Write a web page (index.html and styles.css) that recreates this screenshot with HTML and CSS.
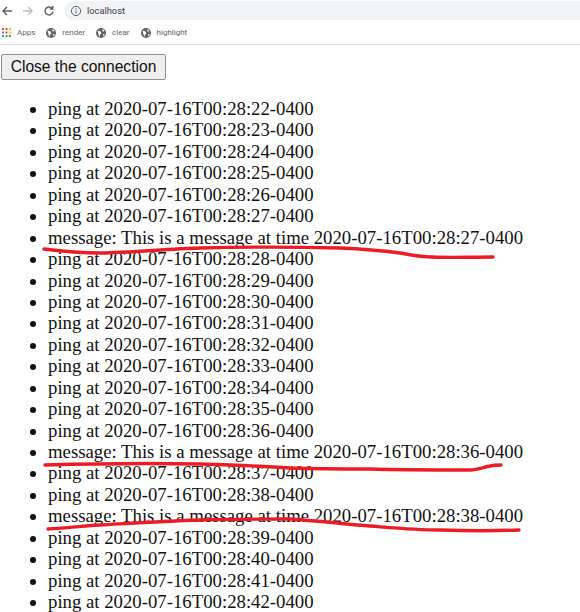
FILE: index.html
```html
<!DOCTYPE html>
<html lang="en">
<head>
  <meta charset="UTF-8" />
  <title>localhost</title>
  <link rel="stylesheet" href="styles.css">
</head>
<body>
<div class="chrome">
  <div class="toolbar">
    <svg class="nav-icon" viewBox="0 0 12 12"><path d="M11 6H2M6 2L2 6l4 4" fill="none" stroke="#5f6368" stroke-width="1.5"/></svg>
    <svg class="nav-icon" viewBox="0 0 12 12"><path d="M1 6h9M6 2l4 4-4 4" fill="none" stroke="#bdc1c6" stroke-width="1.5"/></svg>
    <svg class="nav-icon" viewBox="0 0 12 12"><path d="M10 6.500A4 4 0 1 1 8.800 3M9.800 1v3h-3" fill="none" stroke="#5f6368" stroke-width="1.500"/></svg>
    <div class="omnibox">
      <svg class="info-icon" viewBox="0 0 12 12"><circle cx="6" cy="6" r="4.600" fill="none" stroke="#5f6368"/><path d="M6 5.300v3.200M6 3.400v1" stroke="#5f6368"/></svg>
      <span class="url">localhost</span>
    </div>
  </div>
  <div class="bookmarks">
    <div class="bookmark">
      <svg class="apps-icon" viewBox="0 0 9 9">
        <rect x="0" y="0" width="2" height="2" fill="#ea4335"/><rect x="3.500" y="0" width="2" height="2" fill="#ea4335"/><rect x="7" y="0" width="2" height="2" fill="#fbbc05"/>
        <rect x="0" y="3.500" width="2" height="2" fill="#4285f4"/><rect x="3.500" y="3.500" width="2" height="2" fill="#ea4335"/><rect x="7" y="3.500" width="2" height="2" fill="#fbbc05"/>
        <rect x="0" y="7" width="2" height="2" fill="#4285f4"/><rect x="3.500" y="7" width="2" height="2" fill="#34a853"/><rect x="7" y="7" width="2" height="2" fill="#34a853"/>
      </svg>
      <span>Apps</span>
    </div>
    <div class="bookmark"><svg class="globe-icon" viewBox="0 0 10 10"><circle cx="5" cy="5" r="5" fill="#5f6368"/><path d="M1.500 2.500l3 1 1 2-1.500 1-.5 2.500-1-2.500zM6 1l2.500 1.500L7 4zM7 6l2 .5L7.500 8.500z" fill="#fff"/></svg><span>render</span></div>
    <div class="bookmark"><svg class="globe-icon" viewBox="0 0 10 10"><circle cx="5" cy="5" r="5" fill="#5f6368"/><path d="M1.500 2.500l3 1 1 2-1.500 1-.5 2.500-1-2.500zM6 1l2.500 1.500L7 4zM7 6l2 .5L7.500 8.500z" fill="#fff"/></svg><span>clear</span></div>
    <div class="bookmark"><svg class="globe-icon" viewBox="0 0 10 10"><circle cx="5" cy="5" r="5" fill="#5f6368"/><path d="M1.500 2.500l3 1 1 2-1.500 1-.5 2.500-1-2.500zM6 1l2.500 1.500L7 4zM7 6l2 .5L7.500 8.500z" fill="#fff"/></svg><span>highlight</span></div>
  </div>
</div>

<div class="page">
  <button class="close-btn">Close the connection</button>
  <ul class="events">
    <li>ping at 2020-07-16T00:28:22-0400</li>
    <li>ping at 2020-07-16T00:28:23-0400</li>
    <li>ping at 2020-07-16T00:28:24-0400</li>
    <li>ping at 2020-07-16T00:28:25-0400</li>
    <li>ping at 2020-07-16T00:28:26-0400</li>
    <li>ping at 2020-07-16T00:28:27-0400</li>
    <li>message: This is a message at time 2020-07-16T00:28:27-0400</li>
    <li>ping at 2020-07-16T00:28:28-0400</li>
    <li>ping at 2020-07-16T00:28:29-0400</li>
    <li>ping at 2020-07-16T00:28:30-0400</li>
    <li>ping at 2020-07-16T00:28:31-0400</li>
    <li>ping at 2020-07-16T00:28:32-0400</li>
    <li>ping at 2020-07-16T00:28:33-0400</li>
    <li>ping at 2020-07-16T00:28:34-0400</li>
    <li>ping at 2020-07-16T00:28:35-0400</li>
    <li>ping at 2020-07-16T00:28:36-0400</li>
    <li>message: This is a message at time 2020-07-16T00:28:36-0400</li>
    <li>ping at 2020-07-16T00:28:37-0400</li>
    <li>ping at 2020-07-16T00:28:38-0400</li>
    <li>message: This is a message at time 2020-07-16T00:28:38-0400</li>
    <li>ping at 2020-07-16T00:28:39-0400</li>
    <li>ping at 2020-07-16T00:28:40-0400</li>
    <li>ping at 2020-07-16T00:28:41-0400</li>
    <li>ping at 2020-07-16T00:28:42-0400</li>
  </ul>
</div>

<!-- red marker strokes drawn over the list -->
<svg class="ink" viewBox="0 0 580 612">
  <path d="M44 249C60 251 80 253 100 253C130 253 165 249 200 248C240 247 300 247 340 248C365 249 385 251 400 253C412 255 420 257 432 257C450 258 470 257 493 257"/>
  <path d="M45 465C80 464 150 463 200 464C230 465 260 466 290 468C320 469 345 469 370 469C400 470 440 470 470 470C478 470 484 467 490 466C494 465 498 465 501 465"/>
  <path d="M48 529C65 528 82 526 100 525C135 523 165 521 200 520C230 519 260 519 290 519C320 521 345 524 370 526C395 528 415 530 440 530C470 531 495 531 519 530"/>
</svg>
</body>
</html>
```

FILE: styles.css
```css
html, body {
  margin: 0;
  height: 612px;
  overflow: hidden;
}
body {
  position: relative;
  background: #fff;
  font-family: "Liberation Serif", serif;
}
.chrome {
  height: 44px;
  border-bottom: 1px solid #dadce0;
  font-family: Roboto, "Liberation Sans", sans-serif;
  color: #5f6368;
}
.toolbar {
  display: flex;
  align-items: center;
  height: 21px;
  padding-left: 1px;
}
.nav-icon {
  width: 12px;
  height: 12px;
  margin-right: 9px;
  flex: none;
}
.omnibox {
  display: flex;
  align-items: center;
  flex: 1;
  height: 19px;
  margin-left: 0;
  padding-left: 6px;
  gap: 5px;
  background: #f1f3f4;
  border-radius: 10px 0 0 10px;
}
.info-icon {
  width: 12px;
  height: 12px;
}
.url {
  font-size: 9.300px;
  color: #3c4043;
}
.bookmarks {
  display: flex;
  align-items: center;
  height: 23px;
  padding-left: 2px;
  gap: 11px;
  font-size: 8px;
}
.bookmark {
  display: flex;
  align-items: center;
  gap: 6px;
}
.apps-icon {
  width: 9px;
  height: 9px;
}
.globe-icon {
  width: 10px;
  height: 10px;
}
.page {
  padding: 9px 1px 0;
}
.close-btn {
  display: block;
  width: 165px;
  height: 26px;
  padding: 0;
  font-family: "Liberation Sans", sans-serif;
  font-size: 15.600px;
  color: #111;
  background: #efefef;
  border: 1px solid #8f8f8f;
  border-radius: 2px;
}
.events {
  margin: 18px 0 0;
  padding-left: 47px;
  font-size: 18.750px;
  line-height: 21.430px;
  color: #111;
}
.ink {
  position: absolute;
  top: 0;
  left: 0;
  width: 580px;
  height: 612px;
  pointer-events: none;
}
.ink path {
  fill: none;
  stroke: #ed1c24;
  stroke-width: 3.400;
  stroke-linecap: round;
}
```
